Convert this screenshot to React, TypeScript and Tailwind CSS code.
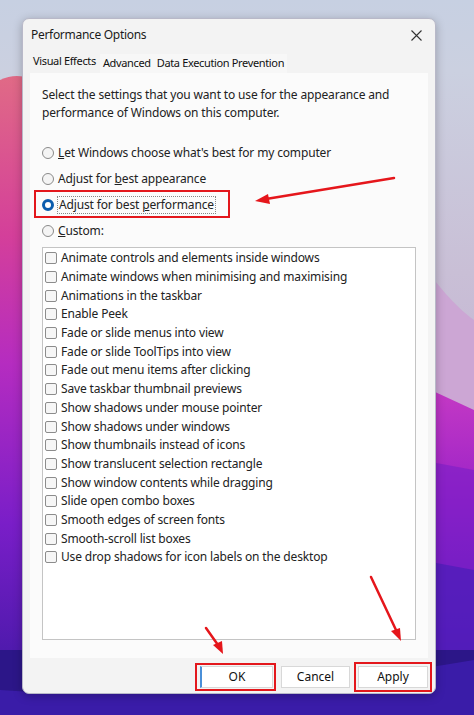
import React from "react";

const items = [
  "Animate controls and elements inside windows",
  "Animate windows when minimising and maximising",
  "Animations in the taskbar",
  "Enable Peek",
  "Fade or slide menus into view",
  "Fade or slide ToolTips into view",
  "Fade out menu items after clicking",
  "Save taskbar thumbnail previews",
  "Show shadows under mouse pointer",
  "Show shadows under windows",
  "Show thumbnails instead of icons",
  "Show translucent selection rectangle",
  "Show window contents while dragging",
  "Slide open combo boxes",
  "Smooth edges of screen fonts",
  "Smooth-scroll list boxes",
  "Use drop shadows for icon labels on the desktop",
];

function Radio({ checked }: { checked?: boolean }) {
  return checked ? (
    <span className="w-[12px] h-[12px] rounded-full border-[3.5px] border-[#0b5cad] bg-white shrink-0" />
  ) : (
    <span className="w-[12px] h-[12px] rounded-full border border-[#8a8a8a] bg-[#f4f4f4] shrink-0" />
  );
}

function Wallpaper() {
  return (
    <svg className="absolute inset-0" width="474" height="715" viewBox="0 0 474 715">
      <defs>
        <linearGradient id="bgv" x1="0" y1="0" x2="0" y2="1">
          <stop offset="0" stopColor="#c7d0e2" />
          <stop offset="0.1" stopColor="#cbd0e0" />
          <stop offset="0.38" stopColor="#c9bfd6" />
          <stop offset="1" stopColor="#b9a0d0" />
        </linearGradient>
        <linearGradient id="left" x1="0" y1="0" x2="0" y2="1">
          <stop offset="0" stopColor="#e06a86" />
          <stop offset="0.25" stopColor="#d43f9a" />
          <stop offset="0.45" stopColor="#b52cc0" />
          <stop offset="0.7" stopColor="#7a1ec8" />
          <stop offset="1" stopColor="#3a18a0" />
        </linearGradient>
        <linearGradient id="right" x1="0" y1="0" x2="0" y2="1">
          <stop offset="0" stopColor="#c63ac4" />
          <stop offset="0.35" stopColor="#9a22c8" />
          <stop offset="0.7" stopColor="#5a1ec0" />
          <stop offset="1" stopColor="#2c1690" />
        </linearGradient>
      </defs>
      <rect width="474" height="715" fill="url(#bgv)" />
      <path d="M0 80 C 10 75 20 75 30 78 L 30 715 L 0 715 Z" fill="url(#left)" />
      <path d="M420 260 C 440 290 460 310 474 320 L 474 715 L 420 715 Z" fill="#cca6d4" />
      <path d="M420 385 L 474 410 L 474 715 L 420 715 Z" fill="url(#right)" />
      <path d="M420 460 L 474 470 L 474 715 L 420 715 Z" fill="#7a1ec6" opacity="0.6" />
      <path d="M420 560 L 474 570 L 474 715 L 420 715 Z" fill="#4a1cb8" opacity="0.7" />
      <rect x="0" y="650" width="474" height="65" fill="#2c1688" />
      <path d="M0 690 C 150 700 300 690 474 660 L 474 715 L 0 715 Z" fill="#3a1ca8" />
    </svg>
  );
}

function Arrows() {
  return (
    <svg className="absolute inset-0 pointer-events-none" width="474" height="715" viewBox="0 0 474 715">
      <g stroke="#e5161b" strokeWidth="2.5" strokeLinecap="round" fill="#e5161b">
        <line x1="394" y1="178" x2="266" y2="199" />
        <polygon points="255,201 268,194 270,204" stroke="none" />
        <line x1="206" y1="628" x2="218" y2="645" />
        <polygon points="223,654 213,645 222,641" stroke="none" />
        <line x1="371" y1="577" x2="396" y2="630" />
        <polygon points="401,641 391,631 400,628" stroke="none" />
      </g>
    </svg>
  );
}

export default function App() {
  const font = { fontFamily: '"Noto Sans", "Open Sans", sans-serif' };
  return (
    <div className="relative w-[474px] h-[715px] overflow-hidden" style={font}>
      <Wallpaper />
      <div className="relative pt-[18px] pl-[22px]">
        <div className="w-[414px] h-[676px] rounded-[7px] bg-[#f3f3f3] border border-[#b8b8c8] shadow-[0_2px_10px_rgba(0,0,0,0.25)] flex flex-col px-[7px]">
          <div className="h-[31px] flex items-center justify-between pl-[1px] pr-[6px] pt-[1px]">
            <span className="text-[12px] tracking-[-0.3px] text-[#1b1b1b]">Performance Options</span>
            <svg width="11" height="11" viewBox="0 0 11 11">
              <path d="M0.5 0.5 L10.5 10.5 M10.5 0.5 L0.5 10.5" stroke="#333" strokeWidth="1.1" />
            </svg>
          </div>
          <div className="flex items-end h-[23px] text-[11px] tracking-[-0.35px] text-[#111]">
            <div className="h-[23px] pl-[3px] pr-[4px] bg-[#f3f3f3] flex items-center">Visual Effects</div>
            <div className="h-[19px] px-[3px] bg-[#f7f7f7] flex items-center">Advanced</div>
            <div className="h-[19px] px-[3px] bg-[#f7f7f7] flex items-center">Data Execution Prevention</div>
          </div>
          <div className="relative w-[398px] h-[585px] bg-[#fbfbfb] flex flex-col pl-[12px] pt-[13px]">
            <p className="text-[12px] leading-[18px] text-[#222] tracking-[-0.15px]">
              Select the settings that you want to use for the appearance and
              <br />
              performance of Windows on this computer.
            </p>
            <div className="mt-[22px] flex flex-col gap-[8px] text-[12px] text-[#222] tracking-[-0.15px]">
              <div className="h-[18px] flex items-center gap-[4px]">
                <Radio />
                <span><u>L</u>et Windows choose what's best for my computer</span>
              </div>
              <div className="h-[18px] flex items-center gap-[4px]">
                <Radio />
                <span>Adjust for <u>b</u>est appearance</span>
              </div>
              <div className="h-[18px] flex items-center gap-[3px] relative">
                <Radio checked />
                <span className="border border-dotted border-[#888] px-[1px] leading-[16px]">Adjust for best <u>p</u>erformance</span>
                <div className="absolute left-[-8px] top-[-6px] w-[196px] h-[28px] border-2 border-[#e3171c]" />
              </div>
              <div className="h-[18px] flex items-center gap-[4px]">
                <Radio />
                <span><u>C</u>ustom:</span>
              </div>
            </div>
            <div className="mt-[7px] w-[374px] h-[393px] bg-white border border-[#c4c4c4] pt-[1px] flex flex-col text-[12px] text-[#222] tracking-[-0.15px]">
              {items.map((t) => (
                <div key={t} className="h-[18.7px] flex items-center gap-[4px] pl-[2px]">
                  <span className="w-[12px] h-[12px] rounded-[2px] border border-[#8c8c8c] bg-[#f6f6f6] shrink-0" />
                  <span>{t}</span>
                </div>
              ))}
            </div>
          </div>
          <div className="flex justify-end gap-[8px] pt-[8px] pr-[0px] text-[12px] text-[#111]">
            <div className="relative">
              <div className="w-[73px] h-[22px] bg-white border border-[#d8d8d8] border-l-2 border-l-[#4a8fd8] flex items-center justify-center">OK</div>
              <div className="absolute left-[-5px] top-[-3px] w-[81px] h-[28px] border-2 border-[#e3171c]" />
            </div>
            <div className="w-[69px] h-[22px] bg-white border border-[#d8d8d8] flex items-center justify-center">Cancel</div>
            <div className="relative">
              <div className="w-[70px] h-[22px] bg-white border border-[#d8d8d8] flex items-center justify-center">Apply</div>
              <div className="absolute left-[-4px] top-[-4px] w-[78px] h-[30px] border-2 border-[#e3171c]" />
            </div>
          </div>
        </div>
      </div>
      <Arrows />
    </div>
  );
}
